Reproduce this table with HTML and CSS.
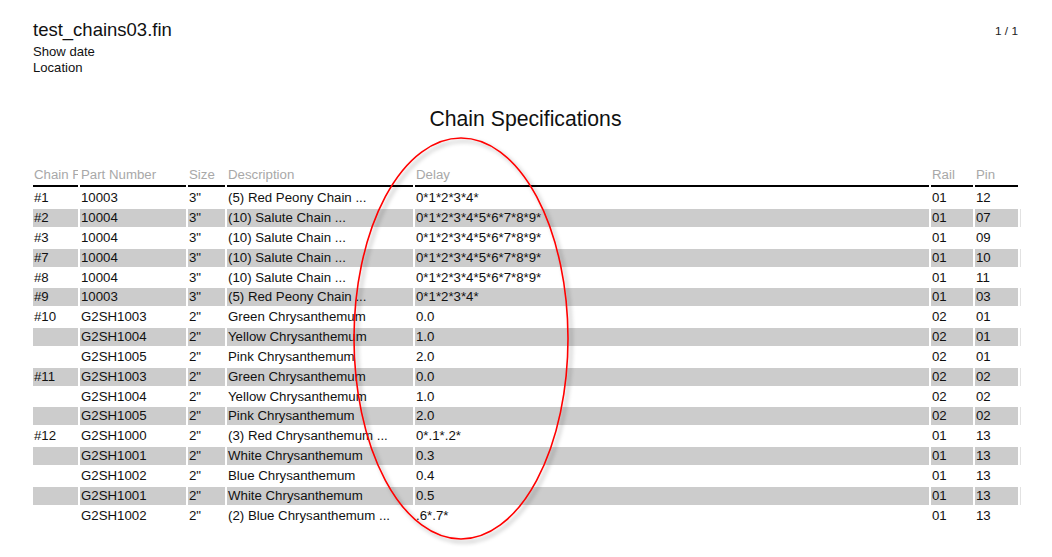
FILE: index.html
```html
<!DOCTYPE html>
<html lang="en">
<head>
<meta charset="utf-8">
<title>test_chains03.fin - Chain Specifications</title>
<link rel="stylesheet" href="styles.css">
</head>
<body>
<div class="page">
  <header class="top">
    <div class="doc-info">
      <div class="doc-name">test_chains03.fin</div>
      <div class="doc-meta">Show date</div>
      <div class="doc-meta">Location</div>
    </div>
    <div class="page-num">1 / 1</div>
  </header>

  <h1 class="report-title">Chain Specifications</h1>

  <div class="grid">
    <div class="row head">
      <div class="cell">Chain Fire</div>
      <div class="cell">Part Number</div>
      <div class="cell">Size</div>
      <div class="cell">Description</div>
      <div class="cell">Delay</div>
      <div class="cell">Rail</div>
      <div class="cell">Pin</div>
      <div class="cell end"></div>
    </div>

    <div class="row"><div class="cell">#1</div><div class="cell">10003</div><div class="cell">3"</div><div class="cell">(5) Red Peony Chain ...</div><div class="cell">0*1*2*3*4*</div><div class="cell">01</div><div class="cell">12</div><div class="cell end"></div></div>
    <div class="row alt"><div class="cell">#2</div><div class="cell">10004</div><div class="cell">3"</div><div class="cell">(10) Salute Chain ...</div><div class="cell">0*1*2*3*4*5*6*7*8*9*</div><div class="cell">01</div><div class="cell">07</div><div class="cell end"></div></div>
    <div class="row"><div class="cell">#3</div><div class="cell">10004</div><div class="cell">3"</div><div class="cell">(10) Salute Chain ...</div><div class="cell">0*1*2*3*4*5*6*7*8*9*</div><div class="cell">01</div><div class="cell">09</div><div class="cell end"></div></div>
    <div class="row alt"><div class="cell">#7</div><div class="cell">10004</div><div class="cell">3"</div><div class="cell">(10) Salute Chain ...</div><div class="cell">0*1*2*3*4*5*6*7*8*9*</div><div class="cell">01</div><div class="cell">10</div><div class="cell end"></div></div>
    <div class="row"><div class="cell">#8</div><div class="cell">10004</div><div class="cell">3"</div><div class="cell">(10) Salute Chain ...</div><div class="cell">0*1*2*3*4*5*6*7*8*9*</div><div class="cell">01</div><div class="cell">11</div><div class="cell end"></div></div>
    <div class="row alt"><div class="cell">#9</div><div class="cell">10003</div><div class="cell">3"</div><div class="cell">(5) Red Peony Chain ...</div><div class="cell">0*1*2*3*4*</div><div class="cell">01</div><div class="cell">03</div><div class="cell end"></div></div>
    <div class="row"><div class="cell">#10</div><div class="cell">G2SH1003</div><div class="cell">2"</div><div class="cell">Green Chrysanthemum</div><div class="cell">0.0</div><div class="cell">02</div><div class="cell">01</div><div class="cell end"></div></div>
    <div class="row alt"><div class="cell"></div><div class="cell">G2SH1004</div><div class="cell">2"</div><div class="cell">Yellow Chrysanthemum</div><div class="cell">1.0</div><div class="cell">02</div><div class="cell">01</div><div class="cell end"></div></div>
    <div class="row"><div class="cell"></div><div class="cell">G2SH1005</div><div class="cell">2"</div><div class="cell">Pink Chrysanthemum</div><div class="cell">2.0</div><div class="cell">02</div><div class="cell">01</div><div class="cell end"></div></div>
    <div class="row alt"><div class="cell">#11</div><div class="cell">G2SH1003</div><div class="cell">2"</div><div class="cell">Green Chrysanthemum</div><div class="cell">0.0</div><div class="cell">02</div><div class="cell">02</div><div class="cell end"></div></div>
    <div class="row"><div class="cell"></div><div class="cell">G2SH1004</div><div class="cell">2"</div><div class="cell">Yellow Chrysanthemum</div><div class="cell">1.0</div><div class="cell">02</div><div class="cell">02</div><div class="cell end"></div></div>
    <div class="row alt"><div class="cell"></div><div class="cell">G2SH1005</div><div class="cell">2"</div><div class="cell">Pink Chrysanthemum</div><div class="cell">2.0</div><div class="cell">02</div><div class="cell">02</div><div class="cell end"></div></div>
    <div class="row"><div class="cell">#12</div><div class="cell">G2SH1000</div><div class="cell">2"</div><div class="cell">(3) Red Chrysanthemum ...</div><div class="cell">0*.1*.2*</div><div class="cell">01</div><div class="cell">13</div><div class="cell end"></div></div>
    <div class="row alt"><div class="cell"></div><div class="cell">G2SH1001</div><div class="cell">2"</div><div class="cell">White Chrysanthemum</div><div class="cell">0.3</div><div class="cell">01</div><div class="cell">13</div><div class="cell end"></div></div>
    <div class="row"><div class="cell"></div><div class="cell">G2SH1002</div><div class="cell">2"</div><div class="cell">Blue Chrysanthemum</div><div class="cell">0.4</div><div class="cell">01</div><div class="cell">13</div><div class="cell end"></div></div>
    <div class="row alt"><div class="cell"></div><div class="cell">G2SH1001</div><div class="cell">2"</div><div class="cell">White Chrysanthemum</div><div class="cell">0.5</div><div class="cell">01</div><div class="cell">13</div><div class="cell end"></div></div>
    <div class="row"><div class="cell"></div><div class="cell">G2SH1002</div><div class="cell">2"</div><div class="cell">(2) Blue Chrysanthemum ...</div><div class="cell">.6*.7*</div><div class="cell">01</div><div class="cell">13</div><div class="cell end"></div></div>
  </div>
</div>

<svg class="annotation" width="1052" height="557" viewBox="0 0 1052 557" aria-hidden="true">
  <defs>
    <filter id="shadow" x="-20%" y="-20%" width="140%" height="140%">
      <feDropShadow dx="3" dy="3" stdDeviation="2" flood-color="#000" flood-opacity="0.35"/>
    </filter>
  </defs>
  <ellipse cx="461" cy="338.5" rx="107" ry="200.5" fill="none" stroke="#ff0000" stroke-width="1.6" filter="url(#shadow)"/>
</svg>
</body>
</html>
```

FILE: styles.css
```css
html, body {
  margin: 0;
  padding: 0;
  background: #ffffff;
}

body {
  font-family: "Liberation Sans", Arial, sans-serif;
  color: #111111;
}

.page {
  position: relative;
  width: 1052px;
  height: 557px;
  overflow: hidden;
  padding: 19px 34px 0 33px;
  box-sizing: border-box;
}

.top {
  display: flex;
  justify-content: space-between;
  align-items: flex-start;
}

.doc-name {
  font-size: 18.5px;
  line-height: 22px;
  margin-bottom: 3px;
}

.doc-meta {
  font-size: 13.1px;
  line-height: 15.6px;
}

.page-num {
  font-size: 11.8px;
  line-height: 22px;
  margin-top: 1px;
  color: #222222;
}

.report-title {
  margin: 31px 0 0 0;
  font-size: 21.2px;
  line-height: 26px;
  font-weight: normal;
  text-align: center;
  color: #111111;
}

.grid {
  margin-top: 33px;
  display: flex;
  flex-direction: column;
  gap: 2px;
}

.row {
  display: grid;
  grid-template-columns: 45px 106px 37px 186px 514px 42px 43px 1px;
  column-gap: 2px;
  height: 17.85px;
  font-size: 13.25px;
  line-height: 17px;
}

.row.head {
  height: 22px;
  line-height: 20px;
  color: #a8a8a8;
}

.cell {
  padding-left: 1px;
  white-space: nowrap;
  overflow: hidden;
}

.row.head .cell {
  border-bottom: 2px solid #000000;
}

.row.head .cell.end {
  border-bottom: none;
}

.row.alt .cell {
  background: #cccccc;
}

.row.alt .cell.end {
  background: #e2e2e2;
}

.cell.end {
  padding: 0;
}

.annotation {
  position: absolute;
  top: 0;
  left: 0;
  pointer-events: none;
}
```
